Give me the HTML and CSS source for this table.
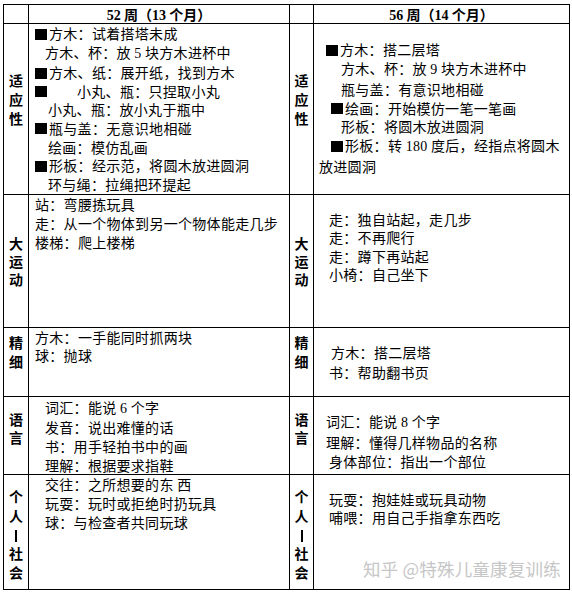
FILE: index.html
```html
<!DOCTYPE html>
<html lang="zh-CN">
<head>
<meta charset="utf-8">
<title>52周与56周发育对照</title>
<link rel="stylesheet" href="styles.css">
</head>
<body>
<div class="page">
  <div class="sheet">
    <div class="cell"></div>
    <div class="cell hd"><span class="n">52</span> 周（<span class="n">13</span> 个月）</div>
    <div class="cell"></div>
    <div class="cell hd"><span class="n">56</span> 周（<span class="n">14</span> 个月）</div>

    <div class="cell lab r1"><div>适</div><div>应</div><div>性</div></div>
    <div class="cell txt r1l">
      <div class="i6"><span class="sq"></span>方木：试着搭塔未成</div>
      <div class="i16">方木、杯：放 <span class="n">5</span> 块方木进杯中</div>
      <div class="i6"><span class="sq"></span>方木、纸：展开纸，找到方木</div>
      <div class="i6"><span class="sq"></span><span class="gap"></span>小丸、瓶：只捏取小丸</div>
      <div class="i19">小丸、瓶：放小丸于瓶中</div>
      <div class="i6"><span class="sq"></span>瓶与盖：无意识地相碰</div>
      <div class="i19">绘画：模仿乱画</div>
      <div class="i6"><span class="sq"></span>形板：经示范，将圆木放进圆洞</div>
      <div class="i19">环与绳：拉绳把环提起</div>
    </div>
    <div class="cell lab r1"><div>适</div><div>应</div><div>性</div></div>
    <div class="cell txt r1r">
      <div class="i12"><span class="sq"></span>方木：搭二层塔</div>
      <div class="i27">方木、杯：放 <span class="n">9</span> 块方木进杯中</div>
      <div class="i27">瓶与盖：有意识地相碰</div>
      <div class="i17"><span class="sq"></span>绘画：开始模仿一笔一笔画</div>
      <div class="i27">形板：将圆木放进圆洞</div>
      <div class="i17"><span class="sq"></span>形板：转 <span class="n">180</span> 度后，经指点将圆木</div>
      <div class="i5">放进圆洞</div>
    </div>

    <div class="cell lab r2"><div>大</div><div>运</div><div>动</div></div>
    <div class="cell txt r2l">
      <div class="i6">站：弯腰拣玩具</div>
      <div class="i6">走：从一个物体到另一个物体能走几步</div>
      <div class="i6">楼梯：爬上楼梯</div>
    </div>
    <div class="cell lab r2"><div>大</div><div>运</div><div>动</div></div>
    <div class="cell txt r2r">
      <div class="i15">走：独自站起，走几步</div>
      <div class="i15">走：不再爬行</div>
      <div class="i15">走：蹲下再站起</div>
      <div class="i15">小椅：自己坐下</div>
    </div>

    <div class="cell lab r3"><div>精</div><div>细</div></div>
    <div class="cell txt r3l">
      <div class="i6">方木：一手能同时抓两块</div>
      <div class="i6">球：抛球</div>
    </div>
    <div class="cell lab r3"><div>精</div><div>细</div></div>
    <div class="cell txt r3r">
      <div class="i17">方木：搭二层塔</div>
      <div class="i15">书：帮助翻书页</div>
    </div>

    <div class="cell lab r4"><div>语</div><div>言</div></div>
    <div class="cell txt r4l">
      <div class="i16">词汇：能说 <span class="n">6</span> 个字</div>
      <div class="i16">发音：说出难懂的话</div>
      <div class="i16">书：用手轻拍书中的画</div>
      <div class="i16">理解：根据要求指鞋</div>
    </div>
    <div class="cell lab r4"><div>语</div><div>言</div></div>
    <div class="cell txt r4r">
      <div class="i12">词汇：能说 <span class="n">8</span> 个字</div>
      <div class="i12">理解：懂得几样物品的名称</div>
      <div class="i15">身体部位：指出一个部位</div>
    </div>

    <div class="cell lab r5"><div>个</div><div>人</div><div class="barline"><span class="bar"></span></div><div>社</div><div>会</div></div>
    <div class="cell txt r5l">
      <div class="i16">交往：之所想要的东 西</div>
      <div class="i16">玩耍：玩时或拒绝时扔玩具</div>
      <div class="i16">球：与检查者共同玩球</div>
    </div>
    <div class="cell lab r5"><div>个</div><div>人</div><div class="barline"><span class="bar"></span></div><div>社</div><div>会</div></div>
    <div class="cell txt r5r">
      <div class="i15">玩耍：抱娃娃或玩具动物</div>
      <div class="i15">哺喂：用自己手指拿东西吃</div>
    </div>
  </div>
  <div class="watermark">知乎 @特殊儿童康复训练</div>
</div>
</body>
</html>
```

FILE: styles.css
```css
html, body {
  margin: 0;
  padding: 0;
  background: #fff;
}

body {
  font-family: "Noto Sans CJK SC", sans-serif;
  color: #000;
}

.page {
  position: relative;
  padding: 4px 0 0 3px;
}

.sheet {
  display: grid;
  grid-template-columns: 24px 260px 23px 255px;
  grid-template-rows: 18px 170px 132px 68px 77px 114px;
  gap: 1px;
  background: #000;
  border: 1px solid #000;
  width: max-content;
}

.cell {
  background: #fff;
  overflow: hidden;
}

.n {
  font-family: "Liberation Serif", serif;
}

/* header */
.hd {
  font-weight: 700;
  font-size: 14px;
  line-height: 18px;
  text-align: center;
  white-space: nowrap;
}

/* vertical labels */
.lab {
  display: flex;
  flex-direction: column;
  align-items: center;
  font-weight: 700;
  font-size: 14px;
}
.lab.r1 { padding-top: 47px; line-height: 19px; }
.lab.r2 { padding-top: 39px; line-height: 18px; }
.lab.r3 { padding-top: 5px; line-height: 19px; }
.lab.r4 { padding-top: 13px; line-height: 18px; }
.lab.r5 { padding-top: 12px; line-height: 19px; }

.barline {
  height: 19px;
  display: flex;
  align-items: center;
}
.bar {
  display: block;
  width: 2px;
  height: 12px;
  background: #000;
  margin-top: 2px;
}

/* content text */
.txt {
  font-size: 14px;
  letter-spacing: 0.3px;
  white-space: nowrap;
}
.txt.r1l { padding-top: 0; line-height: 18.6px; }
.txt.r1r { padding-top: 16px; line-height: 18.85px; }
.txt.r2l { padding-top: 0; line-height: 19px; }
.txt.r2r { padding-top: 15px; line-height: 18.4px; }
.txt.r3l { padding-top: 0; line-height: 18px; }
.txt.r3r { padding-top: 14px; line-height: 20px; }
.txt.r4l { padding-top: 1px; line-height: 19px; }
.txt.r4r { padding-top: 15px; line-height: 19.5px; }
.txt.r5l { padding-top: 0; line-height: 19.2px; }
.txt.r5r { padding-top: 15px; line-height: 18px; }

.i5 { padding-left: 5px; }
.i6 { padding-left: 6px; }
.i12 { padding-left: 12px; }
.i15 { padding-left: 15px; }
.i16 { padding-left: 16px; }
.i17 { padding-left: 17px; }
.i19 { padding-left: 19px; }
.i27 { padding-left: 27px; }

.sq {
  display: inline-block;
  width: 12px;
  height: 11px;
  background: #000;
  margin-right: 2px;
  vertical-align: -0.5px;
}

.gap {
  display: inline-block;
  width: 28px;
}

.watermark {
  position: absolute;
  left: 363px;
  top: 559px;
  font-size: 17.5px;
  line-height: 20px;
  color: #c6c6c6;
  white-space: nowrap;
  letter-spacing: 0.2px;
}
```
